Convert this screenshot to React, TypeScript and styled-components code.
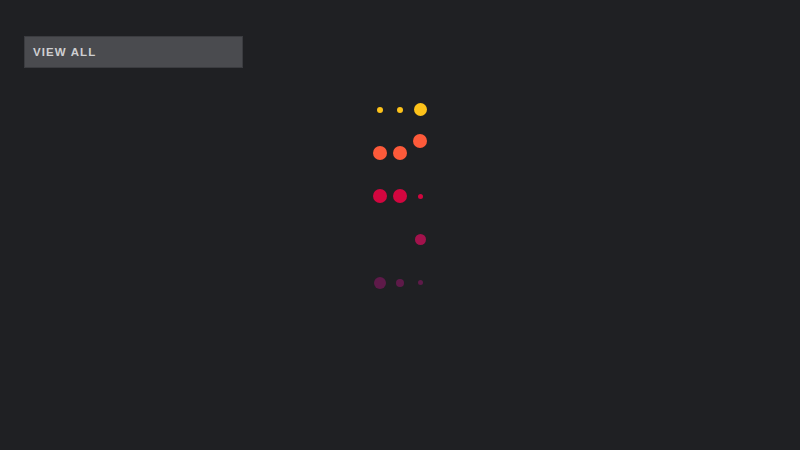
import React from "react";
import styled, { createGlobalStyle } from "styled-components";

const GlobalStyle = createGlobalStyle`
  html, body {
    margin: 0;
    padding: 0;
    background: #1f2023;
  }
`;

type DotSpec = { size: number; color: string; lift?: number } | null;

// rows of the loader, left to right
const rows: DotSpec[][] = [
  [
    { size: 6, color: "#fdc21a" },
    { size: 6, color: "#fdc21a" },
    { size: 13, color: "#fdc21a" },
  ],
  [
    { size: 14, color: "#fd5a3a" },
    { size: 14, color: "#fd5a3a" },
    { size: 14, color: "#fd5a3a", lift: 12 },
  ],
  [
    { size: 14, color: "#d2063f" },
    { size: 14, color: "#d2063f" },
    { size: 5, color: "#d2063f" },
  ],
  [null, null, { size: 11, color: "#a3124c" }],
  [
    { size: 12, color: "#5e1a49" },
    { size: 8, color: "#5e1a49" },
    { size: 5, color: "#5e1a49" },
  ],
];

const App: React.FC = () => {
  return (
    <>
      <GlobalStyle />
      <Page>
        <ViewAll>VIEW ALL</ViewAll>
        <Loader>
          {rows.map((row, r) =>
            row.map((dot, c) => (
              <Cell key={`${r}-${c}`}>
                {dot && (
                  <Dot $size={dot.size} $color={dot.color} $lift={dot.lift ?? 0} />
                )}
              </Cell>
            ))
          )}
        </Loader>
      </Page>
    </>
  );
};

const Page = styled.div`
  width: 800px;
  height: 450px;
  box-sizing: border-box;
  padding: 36px 24px 0;
  background: #1f2023;
  font-family: "Liberation Sans", Arial, sans-serif;
`;

const ViewAll = styled.button`
  display: flex;
  align-items: center;
  width: 219px;
  height: 32px;
  box-sizing: border-box;
  padding: 0 0 1px 8px;
  margin: 0;
  background: #4a4b4f;
  border: 1px solid #3b3c40;
  color: #cfcfd1;
  font-family: "Liberation Sans", Arial, sans-serif;
  font-size: 11.5px;
  font-weight: 700;
  letter-spacing: 1.1px;
  cursor: pointer;
`;

const Loader = styled.div`
  display: grid;
  grid-template-columns: repeat(3, 20px);
  grid-auto-rows: 43.3px;
  width: 60px;
  margin: 20px auto 0;
`;

const Cell = styled.div`
  display: flex;
  align-items: center;
  justify-content: center;
`;

const Dot = styled.span<{ $size: number; $color: string; $lift: number }>`
  display: block;
  width: ${(p) => p.$size}px;
  height: ${(p) => p.$size}px;
  border-radius: 50%;
  background: ${(p) => p.$color};
  transform: translateY(-${(p) => p.$lift}px);
`;

export default App;
